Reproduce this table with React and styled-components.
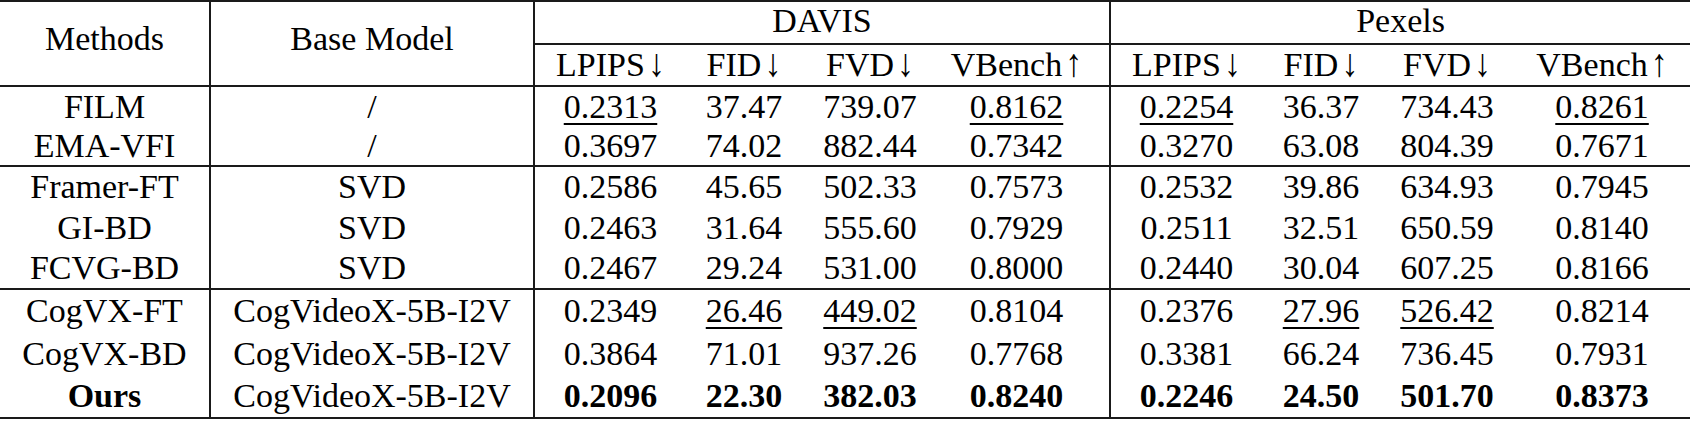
import React from "react";
import styled, { createGlobalStyle } from "styled-components";

const Global = createGlobalStyle`
  html, body { margin: 0; padding: 0; background: #fff; }
  body { font-family: "Liberation Serif", "Times New Roman", serif; color: #000; }
`;

const LINE = "#1a1a1a";
const SERIF = `"Liberation Serif", "Times New Roman", serif`;

const Table = styled.table`
  width: 1690px;
  border-collapse: collapse;
  table-layout: fixed;
  font-family: ${SERIF};
  font-size: 34px;
  line-height: 1;
  color: #000;
  border-top: 2px solid ${LINE};
  border-bottom: 2px solid ${LINE};
`;

const Row = styled.tr`
  height: ${(p) => p.$h || 41}px;
  border-top: ${(p) => (p.$rule ? `2px solid ${LINE}` : "none")};
`;

const Cell = styled.td`
  padding: 0 ${(p) => p.$pr || 0}px ${(p) => p.$pb || 0}px 0;
  font-family: ${SERIF};
  font-size: 34px;
  text-align: center;
  vertical-align: middle;
  white-space: nowrap;
  font-weight: ${(p) => (p.$bold ? 700 : 400)};
  border-right: ${(p) => (p.$sep ? `2px solid ${LINE}` : "none")};
`;

const GroupHead = styled(Cell).attrs({ as: "th" })`
  font-weight: 400;
  border-bottom: 2px solid ${LINE};
`;

const HeadCell = styled(Cell).attrs({ as: "th" })`
  font-weight: 400;
`;

const Arrow = styled.span`
  display: inline-block;
  margin-left: 3px;
  transform: scaleY(1.15);
  transform-origin: 50% 80%;
`;

const Under = styled.span`
  text-decoration: underline;
  text-decoration-thickness: 2px;
  text-underline-offset: 5px;
`;

const cols = [210, 324, 152, 116, 136, 172, 152, 118, 134, 176];

const metrics = [
  ["LPIPS", "\u2193"],
  ["FID", "\u2193"],
  ["FVD", "\u2193"],
  ["VBench", "\u2191"],
];

const groups = [
  {
    h: 40,
    rows: [
      ["FILM", "/", ["_0.2313", "37.47", "739.07", "_0.8162"], ["_0.2254", "36.37", "734.43", "_0.8261"]],
      ["EMA-VFI", "/", ["0.3697", "74.02", "882.44", "0.7342"], ["0.3270", "63.08", "804.39", "0.7671"]],
    ],
  },
  {
    h: 41,
    rows: [
      ["Framer-FT", "SVD", ["0.2586", "45.65", "502.33", "0.7573"], ["0.2532", "39.86", "634.93", "0.7945"]],
      ["GI-BD", "SVD", ["0.2463", "31.64", "555.60", "0.7929"], ["0.2511", "32.51", "650.59", "0.8140"]],
      ["FCVG-BD", "SVD", ["0.2467", "29.24", "531.00", "0.8000"], ["0.2440", "30.04", "607.25", "0.8166"]],
    ],
  },
  {
    h: 43,
    rows: [
      ["CogVX-FT", "CogVideoX-5B-I2V", ["0.2349", "_26.46", "_449.02", "0.8104"], ["0.2376", "_27.96", "_526.42", "0.8214"]],
      ["CogVX-BD", "CogVideoX-5B-I2V", ["0.3864", "71.01", "937.26", "0.7768"], ["0.3381", "66.24", "736.45", "0.7931"]],
      ["*Ours", "CogVideoX-5B-I2V", ["*0.2096", "*22.30", "*382.03", "*0.8240"], ["*0.2246", "*24.50", "*501.70", "*0.8373"]],
    ],
  },
];

function Value({ v }) {
  if (v.startsWith("_")) return <Under>{v.slice(1)}</Under>;
  if (v.startsWith("*")) return v.slice(1);
  return v;
}

const isBold = (v) => v.startsWith("*");

function Metric({ name, arrow }) {
  return (
    <>
      {name}
      <Arrow>{arrow}</Arrow>
    </>
  );
}

export default function App() {
  return (
    <>
      <Global />
      <Table>
        <colgroup>
          {cols.map((w, i) => (
            <col key={i} style={{ width: w }} />
          ))}
        </colgroup>
        <thead>
          <Row $h={43}>
            <HeadCell rowSpan={2} $sep $pb={10}>Methods</HeadCell>
            <HeadCell rowSpan={2} $sep $pb={10}>Base Model</HeadCell>
            <GroupHead colSpan={4} $sep $pb={4}>DAVIS</GroupHead>
            <GroupHead colSpan={4} $pb={4}>Pexels</GroupHead>
          </Row>
          <Row $h={42}>
            {metrics.map(([n, a], i) => (
              <HeadCell key={"d" + i} $sep={i === 3} $pr={i === 3 ? 14 : 0}>
                <Metric name={n} arrow={a} />
              </HeadCell>
            ))}
            {metrics.map(([n, a], i) => (
              <HeadCell key={"p" + i}>
                <Metric name={n} arrow={a} />
              </HeadCell>
            ))}
          </Row>
        </thead>
        <tbody>
          {groups.map((g, gi) =>
            g.rows.map(([method, base, davis, pexels], ri) => (
              <Row key={gi + "-" + ri} $rule={ri === 0} $h={g.h}>
                <Cell $sep $bold={isBold(method)}>
                  <Value v={method} />
                </Cell>
                <Cell $sep>{base}</Cell>
                {davis.map((v, i) => (
                  <Cell key={"d" + i} $sep={i === 3} $pr={i === 3 ? 14 : 0} $bold={isBold(v)}>
                    <Value v={v} />
                  </Cell>
                ))}
                {pexels.map((v, i) => (
                  <Cell key={"p" + i} $bold={isBold(v)}>
                    <Value v={v} />
                  </Cell>
                ))}
              </Row>
            ))
          )}
        </tbody>
      </Table>
    </>
  );
}
